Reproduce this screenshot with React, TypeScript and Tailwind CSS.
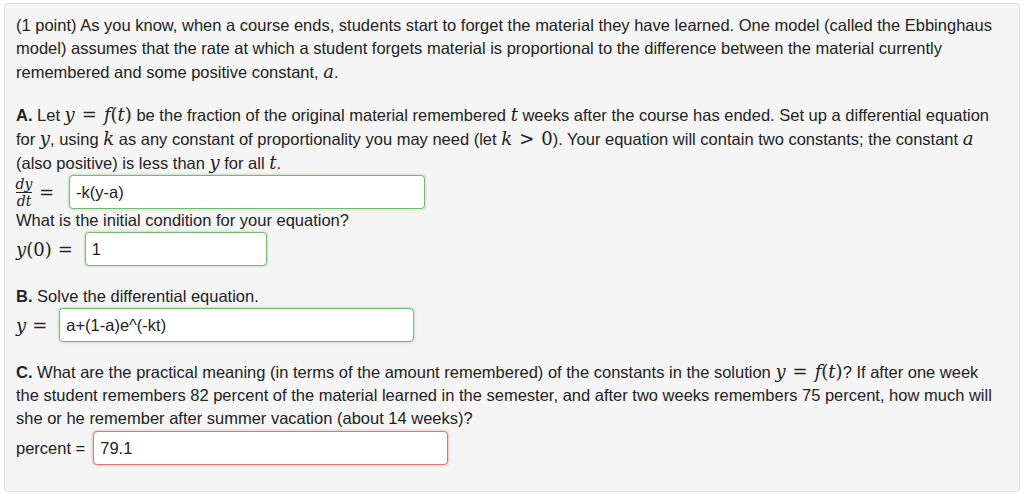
import React from "react";

function V({ children }: { children: React.ReactNode }) {
  return <span className="font-['DejaVu_Serif','Liberation_Serif',serif] italic text-[18px]">{children}</span>;
}

function R({ children }: { children: React.ReactNode }) {
  return <span className="font-['DejaVu_Serif','Liberation_Serif',serif] text-[18px]">{children}</span>;
}

function Op({ children }: { children: React.ReactNode }) {
  return <span className="font-['DejaVu_Serif','Liberation_Serif',serif] text-[18px] mx-[7px]">{children}</span>;
}

function Answer({ value, width, ok = true }: { value: string; width: string; ok?: boolean }) {
  return (
    <div
      className={`${width} h-[34px] flex items-center px-[6px] bg-white rounded-[4px] border ${
        ok
          ? "border-[#76b876] shadow-[0_0_3px_rgba(92,184,92,0.6)]"
          : "border-[#d77a7a] shadow-[0_0_3px_rgba(217,83,79,0.6)]"
      } text-[16.5px] text-[#222]`}
    >
      {value}
    </div>
  );
}

export default function App() {
  return (
    <div className="w-[1024px] h-[495px] bg-white pt-[3px] px-[4px] font-['Liberation_Sans',Arial,sans-serif] text-[16.5px] leading-[23px] text-[#222]">
      <div className="h-[489px] w-[1016px] bg-[#f5f5f5] border border-[#e0e0e0] rounded-[4px] pt-[10px] pl-[11px] pr-[19px]">
        <p>
          (1 point) As you know, when a course ends, students start to forget the material they have learned. One model
          (called the Ebbinghaus model) assumes that the rate at which a student forgets material is proportional to the
          difference between the material currently remembered and some positive constant, <V>a</V>.
        </p>

        <p className="mt-[19px]">
          <b>A.</b> Let <V>y</V>
          <Op>=</Op>
          <V>f</V>
          <R>(</R>
          <V>t</V>
          <R>)</R> be the fraction of the original material remembered <V>t</V> weeks after the course has ended. Set up a
          differential equation for <V>y</V>, using <V>k</V> as any constant of proportionality you may need (let{" "}
          <V>k</V>
          <Op>&gt;</Op>
          <R>0</R>). Your equation will contain two constants; the constant <V>a</V> (also positive) is less than <V>y</V>{" "}
          for all <V>t</V>.
        </p>

        <div className="flex items-center">
          <div className="flex flex-col items-center font-['DejaVu_Serif','Liberation_Serif',serif] italic text-[14px] leading-[14px] w-[16px]">
            <span>dy</span>
            <span className="w-full border-t border-[#222] my-[1px]" />
            <span>dt</span>
          </div>
          <span className="font-['DejaVu_Serif','Liberation_Serif',serif] text-[18px] ml-[7px] mr-[15px]">=</span>
          <Answer value="-k(y-a)" width="w-[356px]" />
        </div>

        <p>What is the initial condition for your equation?</p>

        <div className="flex items-center">
          <V>y</V>
          <R>(0)</R>
          <span className="font-['DejaVu_Serif','Liberation_Serif',serif] text-[18px] ml-[6px] mr-[12px]">=</span>
          <Answer value="1" width="w-[182px]" />
        </div>

        <p className="mt-[19px]">
          <b>B.</b> Solve the differential equation.
        </p>

        <div className="flex items-center">
          <V>y</V>
          <span className="font-['DejaVu_Serif','Liberation_Serif',serif] text-[18px] ml-[6px] mr-[12px]">=</span>
          <Answer value="a+(1-a)e^(-kt)" width="w-[355px]" />
        </div>

        <p className="mt-[18px]">
          <b>C.</b> What are the practical meaning (in terms of the amount remembered) of the constants in the solution{" "}
          <V>y</V>
          <Op>=</Op>
          <V>f</V>
          <R>(</R>
          <V>t</V>
          <R>)</R>? If after one week the student remembers 82 percent of the material learned in the semester, and after
          two weeks remembers 75 percent, how much will she or he remember after summer vacation (about 14 weeks)?
        </p>

        <div className="mt-[1px] flex items-center">
          <span className="mr-[8px]">percent =</span>
          <Answer value="79.1" width="w-[355px]" ok={false} />
        </div>
      </div>
    </div>
  );
}
